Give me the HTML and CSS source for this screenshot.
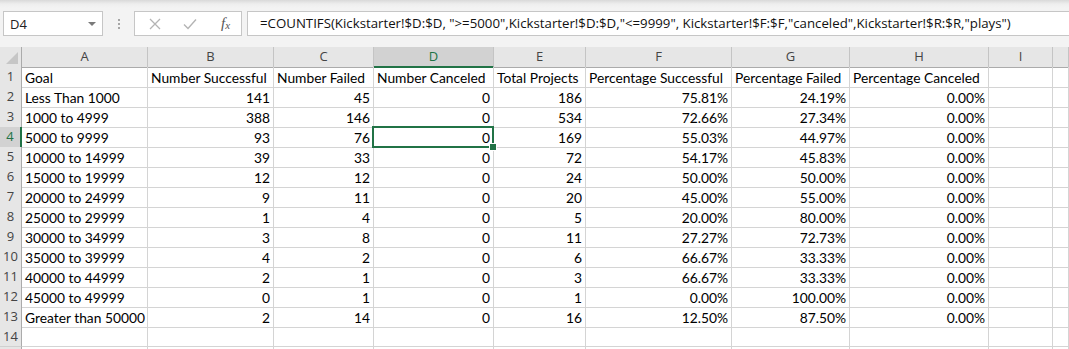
FILE: index.html
```html
<!DOCTYPE html>
<html lang="en">
<head>
    <meta charset="UTF-8">
    <title>Kickstarter goals</title>
    <link rel="stylesheet" href="styles.css">
</head>
<body>
<div id="app">
    <div class="toolbar">
        <div class="namebox">
            <span>D4</span>
            <i class="arrow"></i>
        </div>
        <div class="grip"><b></b><b></b><b></b></div>
        <div class="fbtns">
            <svg class="ico" width="12" height="12" viewBox="0 0 12 12"><path d="M1 1L11 11M11 1L1 11" stroke="#b4b4b4" stroke-width="1.3" fill="none"/></svg>
            <svg class="ico" width="14" height="12" viewBox="0 0 14 12"><path d="M1 6.5L5 10.5L13 1.5" stroke="#b4b4b4" stroke-width="1.4" fill="none"/></svg>
            <span class="fx">f<sub>x</sub></span>
        </div>
        <div class="formula">=COUNTIFS(Kickstarter!$D:$D, "&gt;=5000",Kickstarter!$D:$D,"&lt;=9999", Kickstarter!$F:$F,"canceled",Kickstarter!$R:$R,"plays")</div>
    </div>
    <div class="sheet">
        <div class="row head">
            <div class="corner"><i></i></div>
            <div>A</div><div>B</div><div>C</div><div class="on">D</div><div>E</div><div>F</div><div>G</div><div>H</div><div>I</div><div></div>
        </div>
        <div class="row">
            <div class="rn">1</div>
            <div>Goal</div><div>Number Successful</div><div>Number Failed</div><div>Number Canceled</div><div>Total Projects</div><div>Percentage Successful</div><div>Percentage Failed</div><div>Percentage Canceled</div><div></div><div></div>
        </div>
        <div class="row">
            <div class="rn">2</div>
            <div>Less Than 1000</div><div class="n">141</div><div class="n">45</div><div class="n">0</div><div class="n">186</div><div class="n">75.81%</div><div class="n">24.19%</div><div class="n">0.00%</div><div></div><div></div>
        </div>
        <div class="row">
            <div class="rn">3</div>
            <div>1000 to 4999</div><div class="n">388</div><div class="n">146</div><div class="n">0</div><div class="n">534</div><div class="n">72.66%</div><div class="n">27.34%</div><div class="n">0.00%</div><div></div><div></div>
        </div>
        <div class="row">
            <div class="rn on">4</div>
            <div>5000 to 9999</div><div class="n">93</div><div class="n">76</div><div class="n sel">0<span class="selbox"><i></i></span></div><div class="n">169</div><div class="n">55.03%</div><div class="n">44.97%</div><div class="n">0.00%</div><div></div><div></div>
        </div>
        <div class="row">
            <div class="rn">5</div>
            <div>10000 to 14999</div><div class="n">39</div><div class="n">33</div><div class="n">0</div><div class="n">72</div><div class="n">54.17%</div><div class="n">45.83%</div><div class="n">0.00%</div><div></div><div></div>
        </div>
        <div class="row">
            <div class="rn">6</div>
            <div>15000 to 19999</div><div class="n">12</div><div class="n">12</div><div class="n">0</div><div class="n">24</div><div class="n">50.00%</div><div class="n">50.00%</div><div class="n">0.00%</div><div></div><div></div>
        </div>
        <div class="row">
            <div class="rn">7</div>
            <div>20000 to 24999</div><div class="n">9</div><div class="n">11</div><div class="n">0</div><div class="n">20</div><div class="n">45.00%</div><div class="n">55.00%</div><div class="n">0.00%</div><div></div><div></div>
        </div>
        <div class="row">
            <div class="rn">8</div>
            <div>25000 to 29999</div><div class="n">1</div><div class="n">4</div><div class="n">0</div><div class="n">5</div><div class="n">20.00%</div><div class="n">80.00%</div><div class="n">0.00%</div><div></div><div></div>
        </div>
        <div class="row">
            <div class="rn">9</div>
            <div>30000 to 34999</div><div class="n">3</div><div class="n">8</div><div class="n">0</div><div class="n">11</div><div class="n">27.27%</div><div class="n">72.73%</div><div class="n">0.00%</div><div></div><div></div>
        </div>
        <div class="row">
            <div class="rn">10</div>
            <div>35000 to 39999</div><div class="n">4</div><div class="n">2</div><div class="n">0</div><div class="n">6</div><div class="n">66.67%</div><div class="n">33.33%</div><div class="n">0.00%</div><div></div><div></div>
        </div>
        <div class="row">
            <div class="rn">11</div>
            <div>40000 to 44999</div><div class="n">2</div><div class="n">1</div><div class="n">0</div><div class="n">3</div><div class="n">66.67%</div><div class="n">33.33%</div><div class="n">0.00%</div><div></div><div></div>
        </div>
        <div class="row">
            <div class="rn">12</div>
            <div>45000 to 49999</div><div class="n">0</div><div class="n">1</div><div class="n">0</div><div class="n">1</div><div class="n">0.00%</div><div class="n">100.00%</div><div class="n">0.00%</div><div></div><div></div>
        </div>
        <div class="row">
            <div class="rn">13</div>
            <div>Greater than 50000</div><div class="n">2</div><div class="n">14</div><div class="n">0</div><div class="n">16</div><div class="n">12.50%</div><div class="n">87.50%</div><div class="n">0.00%</div><div></div><div></div>
        </div>
        <div class="row">
            <div class="rn">14</div>
            <div></div><div></div><div></div><div></div><div></div><div></div><div></div><div></div><div></div><div></div>
        </div>
        <div class="row">
            <div class="rn"></div>
            <div></div><div></div><div></div><div></div><div></div><div></div><div></div><div></div><div></div><div></div>
        </div>
    </div>
</div>
</body>
</html>
```

FILE: styles.css
```css
*{margin: 0;padding: 0;box-sizing: border-box;}
html,body{width: 1069px;height: 349px;overflow: hidden;background: #fff;}
#app{width: 1069px;}

/* formula bar */
.toolbar{
    height: 47px;
    display: flex;
    align-items: flex-start;
    padding: 11px 0 0 3px;
    background: linear-gradient(#d9d9d9 0, #eeeeee 4px, #f3f3f3 8px);
    font-family: "Open Sans", "Noto Sans", sans-serif;
}
.namebox{
    width: 100px;
    height: 25px;
    background: #fff;
    border: 1px solid #c6c6c6;
    display: flex;
    align-items: center;
    justify-content: space-between;
    padding: 0 6px 0 6px;
    font-size: 13px;
    color: #222;
}
.namebox .arrow{
    width: 0;height: 0;
    border-left: 4px solid transparent;
    border-right: 4px solid transparent;
    border-top: 4px solid #7a7a7a;
}
.grip{
    width: 31px;
    height: 25px;
    display: flex;
    flex-direction: column;
    align-items: center;
    justify-content: center;
    gap: 2px;
}
.grip b{width: 2px;height: 2px;background: #a6a6a6;}
.fbtns{
    width: 108px;
    height: 25px;
    background: #fff;
    border: 1px solid #c6c6c6;
    display: flex;
    align-items: center;
    padding-left: 14px;
    gap: 22px;
}
.fx{
    font-family: "Liberation Serif", serif;
    font-style: italic;
    font-size: 15px;
    color: #555;
    margin-left: 2px;
}
.fx sub{font-size: 11px;vertical-align: -1px;}
.formula{
    flex: 1;
    height: 25px;
    margin-left: 5px;
    background: #fff;
    border: 1px solid #c6c6c6;
    border-right: 0;
    padding-left: 12px;
    font-size: 13.25px;
    line-height: 23px;
    white-space: nowrap;
    overflow: hidden;
    color: #111;
}

/* grid */
.sheet{
    height: 302px;
    overflow: hidden;
    font-family: Lato, "Liberation Sans", sans-serif;
    font-size: 13.8px;
    color: #000;
}
.row{
    display: grid;
    grid-template-columns: 22px 126px 126px 100px 120px 92px 146px 118px 139px 64px 1fr;
    height: 20px;
}
.row > div{
    border-right: 1px solid #d4d4d4;
    border-bottom: 1px solid #d4d4d4;
    line-height: 19px;
    padding: 1px 3px 0 3px;
    white-space: nowrap;
    position: relative;
}
.row > .n{text-align: right;}
.row > .sel{z-index: 2;}
.row > .rn{
    background: #e6e6e6;
    border-right: 1px solid #ababab;
    border-bottom: 1px solid #d0d0d0;
    padding: 0;
    text-align: center;
    font-family: "Open Sans", "Noto Sans", sans-serif;
    font-size: 13px;
    color: #444;
}
.row > .rn.on{
    background: #d2d2d2;
    color: #217346;
    border-right: 2px solid #217346;
}
.head > div{
    background: #e6e6e6;
    border-right: 1px solid #c4c4c4;
    border-bottom: 1px solid #ababab;
    padding: 0;
    text-align: center;
    font-family: "Open Sans", "Noto Sans", sans-serif;
    font-size: 13px;
    color: #444;
}
.head > .on{
    background: #d2d2d2;
    color: #217346;
    border-bottom: 2px solid #217346;
}
.head > .corner{border-right: 1px solid #ababab;}
.corner i{
    position: absolute;
    right: 3px;
    bottom: 3px;
    width: 0;height: 0;
    border-left: 12px solid transparent;
    border-bottom: 12px solid #c6c6c6;
}

/* selected cell */
.selbox{
    position: absolute;
    left: -2px;
    top: -1px;
    right: -1px;
    bottom: -1px;
    border: 2px solid #217346;
}
.selbox i{
    position: absolute;
    right: -5px;
    bottom: -5px;
    width: 8px;
    height: 8px;
    background: #217346;
    border: 1px solid #fff;
}
```
